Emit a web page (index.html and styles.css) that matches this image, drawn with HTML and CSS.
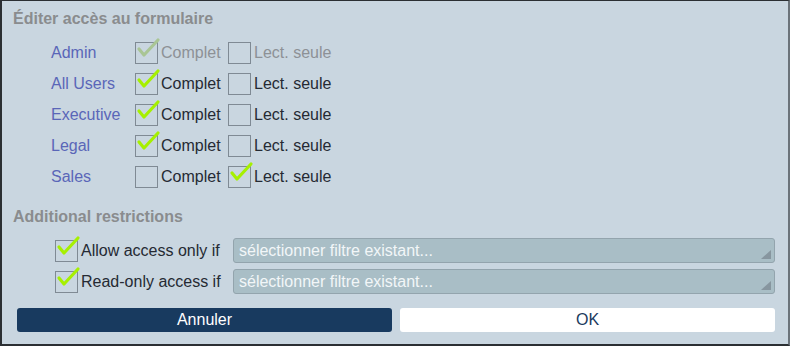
FILE: index.html
```html
<!DOCTYPE html>
<html>
<head>
<meta charset="utf-8">
<link rel="stylesheet" href="styles.css">
</head>
<body>
<div class="dialog">
  <div class="heading">Éditer accès au formulaire</div>
  <div class="perms">
    <div class="row disabled">
      <span class="role">Admin</span>
      <span class="opt"><span class="box on"><svg viewBox="0 0 26 26"><path d="M3 10 L8 16 L22 1"/></svg></span><span class="txt">Complet</span></span>
      <span class="opt"><span class="box"></span><span class="txt">Lect. seule</span></span>
    </div>
    <div class="row">
      <span class="role">All Users</span>
      <span class="opt"><span class="box on"><svg viewBox="0 0 26 26"><path d="M3 10 L8 16 L22 1"/></svg></span><span class="txt">Complet</span></span>
      <span class="opt"><span class="box"></span><span class="txt">Lect. seule</span></span>
    </div>
    <div class="row">
      <span class="role">Executive</span>
      <span class="opt"><span class="box on"><svg viewBox="0 0 26 26"><path d="M3 10 L8 16 L22 1"/></svg></span><span class="txt">Complet</span></span>
      <span class="opt"><span class="box"></span><span class="txt">Lect. seule</span></span>
    </div>
    <div class="row">
      <span class="role">Legal</span>
      <span class="opt"><span class="box on"><svg viewBox="0 0 26 26"><path d="M3 10 L8 16 L22 1"/></svg></span><span class="txt">Complet</span></span>
      <span class="opt"><span class="box"></span><span class="txt">Lect. seule</span></span>
    </div>
    <div class="row">
      <span class="role">Sales</span>
      <span class="opt"><span class="box"></span><span class="txt">Complet</span></span>
      <span class="opt"><span class="box on"><svg viewBox="0 0 26 26"><path d="M3 10 L8 16 L22 1"/></svg></span><span class="txt">Lect. seule</span></span>
    </div>
  </div>
  <div class="heading heading2">Additional restrictions</div>
  <div class="restrictions">
    <div class="rrow">
      <span class="box on"><svg viewBox="0 0 26 26"><path d="M3 10 L8 16 L22 1"/></svg></span>
      <span class="rtxt">Allow access only if</span>
      <div class="select">sélectionner filtre existant...<span class="grip"></span></div>
    </div>
    <div class="rrow">
      <span class="box on"><svg viewBox="0 0 26 26"><path d="M3 10 L8 16 L22 1"/></svg></span>
      <span class="rtxt">Read-only access if</span>
      <div class="select">sélectionner filtre existant...<span class="grip"></span></div>
    </div>
  </div>
  <div class="buttons">
    <div class="btn cancel">Annuler</div>
    <div class="btn ok">OK</div>
  </div>
</div>
</body>
</html>
```
FILE: styles.css
```css
* { box-sizing: border-box; }
html, body { margin: 0; padding: 0; }
body {
  width: 790px;
  height: 346px;
  font-family: "Liberation Sans", Arial, sans-serif;
  background: #c9d6e0;
}
.dialog {
  width: 790px;
  height: 346px;
  background: #c9d6e0;
  border-top: 1px solid #2b2f33;
  border-left: 2px solid #2b2f33;
  border-right: 2px solid #6b737a;
  border-bottom: 2px solid #2b2f33;
  padding: 9px 0 0 11px;
  display: flex;
  flex-direction: column;
}
.heading {
  font-size: 16px;
  font-weight: bold;
  color: #8a8c8e;
  line-height: 18px;
  height: 18px;
  white-space: nowrap;
}
.perms {
  margin-top: 9px;
  padding-left: 38px;
  display: flex;
  flex-direction: column;
}
.row {
  height: 31px;
  display: flex;
  align-items: center;
  font-size: 16px;
  color: #252a33;
  white-space: nowrap;
}
.role {
  width: 84px;
  color: #5a66b8;
}
.opt {
  width: 93px;
  flex: none;
  display: flex;
  align-items: center;
}
.opt:last-child { width: auto; }
.box {
  position: relative;
  width: 23px;
  height: 22px;
  border: 1px solid #7f8a94;
  flex: none;
}
.box svg {
  position: absolute;
  left: 0;
  top: -4px;
  width: 26px;
  height: 26px;
  overflow: visible;
}
.box svg path {
  fill: none;
  stroke: #a6f000;
  stroke-width: 3.2;
  stroke-linecap: round;
  stroke-linejoin: round;
}
.txt { margin-left: 3px; }
.disabled .txt { color: #8d9196; }
.disabled .box svg path { stroke: #a9c594; }
.heading2 { margin-top: 16px; }
.restrictions {
  margin-top: 9px;
  padding-left: 42px;
  display: flex;
  flex-direction: column;
}
.rrow {
  height: 31px;
  display: flex;
  align-items: center;
  font-size: 16px;
  color: #252a33;
}
.rtxt {
  margin-left: 3px;
  width: 152px;
  white-space: nowrap;
}
.select {
  position: relative;
  width: 542px;
  height: 25px;
  background: #a9bec6;
  border: 1px solid #93a4ad;
  border-radius: 3px;
  color: #f2f6f8;
  font-size: 16px;
  line-height: 23px;
  padding-left: 5px;
}
.grip {
  position: absolute;
  right: 3px;
  bottom: 3px;
  width: 0;
  height: 0;
  border-left: 10px solid transparent;
  border-bottom: 9px solid #87969f;
}
.buttons {
  margin-top: 11px;
  padding-left: 4px;
  display: flex;
  gap: 8px;
}
.btn {
  width: 375px;
  height: 24px;
  border-radius: 3px;
  font-size: 16px;
  line-height: 24px;
  text-align: center;
}
.cancel { background: #183a5f; color: #ffffff; }
.ok { background: #ffffff; color: #1b3a5e; }
```
